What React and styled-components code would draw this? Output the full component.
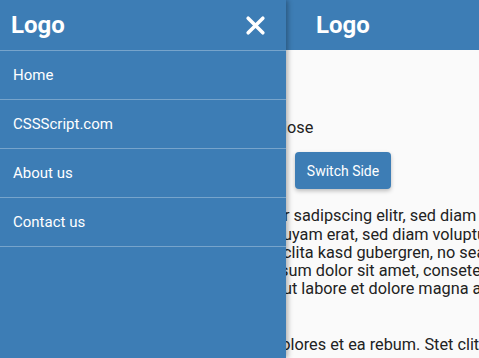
import React from 'react';
import styled, { createGlobalStyle } from 'styled-components';

const GlobalStyle = createGlobalStyle`
  html, body {
    margin: 0;
    padding: 0;
    overflow: hidden;
    background: #fafafa;
    font-family: Roboto, "Liberation Sans", sans-serif;
  }
`;

const blue = '#3d7db5';

const StyledPage = styled.div`
  width: 100%;
  height: 100vh;
  overflow: hidden;
  background: #fafafa;
  position: relative;
`;

const StyledTopBar = styled.div`
  height: 50px;
  background: ${blue};
  display: flex;
  align-items: center;
  padding-left: 316px;
  color: #fff;
  font-size: 24px;
  font-weight: 700;
`;

const StyledContent = styled.div`
  padding: 69px 0 0 283px;
  color: #222;
  font-size: 16.3px;
  line-height: 18.3px;
  white-space: nowrap;
`;

const StyledLine = styled.div`
  margin-left: ${p => p.shift || 0}px;
  margin-bottom: ${p => p.gap || 0}px;
`;

const StyledButton = styled.button`
  margin: 15px 0 18px 12px;
  width: 96px;
  height: 37px;
  border: none;
  border-radius: 4px;
  background: ${blue};
  color: #fff;
  font-family: Roboto, "Liberation Sans", sans-serif;
  font-size: 14px;
  box-shadow: 0 2px 4px rgba(0, 0, 0, 0.25);
  cursor: pointer;
`;

const StyledDrawer = styled.nav`
  position: absolute;
  top: 0;
  left: 0;
  bottom: 0;
  width: 286px;
  background: ${blue};
  box-shadow: 2px 0 5px rgba(0, 0, 0, 0.3);
  color: #fff;
`;

const StyledDrawerHead = styled.div`
  height: 50px;
  display: flex;
  align-items: center;
  justify-content: space-between;
  padding: 0 20px 0 11px;
  border-bottom: 1px solid rgba(255, 255, 255, 0.3);
  font-size: 24px;
  font-weight: 700;
`;

const StyledClose = styled.button`
  background: none;
  border: none;
  padding: 0;
  display: flex;
  color: #fff;
  cursor: pointer;
`;

const StyledItem = styled.a`
  display: flex;
  align-items: center;
  height: 48px;
  padding-left: 13px;
  border-bottom: 1px solid rgba(255, 255, 255, 0.3);
  color: #fff;
  text-decoration: none;
  font-size: 15px;
`;

const lines = [
  { text: 'r sadipscing elitr, sed diam nonumy', shift: 1 },
  { text: 'uyam erat, sed diam voluptua. At vero', shift: 0 },
  { text: 'clita kasd gubergren, no sea takimata', shift: 0 },
  { text: 'sum dolor sit amet, consetetur sadipscing', shift: -3 },
  { text: 'ut labore et dolore magna aliquyam erat', shift: 0 },
];

export default function App() {
  return (
    <>
      <GlobalStyle />
      <StyledPage>
        <StyledTopBar>Logo</StyledTopBar>
        <StyledContent>
          <StyledLine>lose</StyledLine>
          <StyledButton>Switch Side</StyledButton>
          {lines.map((l, i) => (
            <StyledLine key={i} shift={l.shift} gap={i === lines.length - 1 ? 37 : 0}>{l.text}</StyledLine>
          ))}
          <StyledLine shift={-11}>dolores et ea rebum. Stet clita kasd</StyledLine>
        </StyledContent>
        <StyledDrawer>
          <StyledDrawerHead>
            Logo
            <StyledClose aria-label="close">
              <svg width="21" height="21" viewBox="0 0 20 20">
                <path d="M3 3 L17 17 M17 3 L3 17" stroke="#fff" strokeWidth="3.4" strokeLinecap="round" />
              </svg>
            </StyledClose>
          </StyledDrawerHead>
          <StyledItem href="#">Home</StyledItem>
          <StyledItem href="#">CSSScript.com</StyledItem>
          <StyledItem href="#">About us</StyledItem>
          <StyledItem href="#">Contact us</StyledItem>
        </StyledDrawer>
      </StyledPage>
    </>
  );
}
